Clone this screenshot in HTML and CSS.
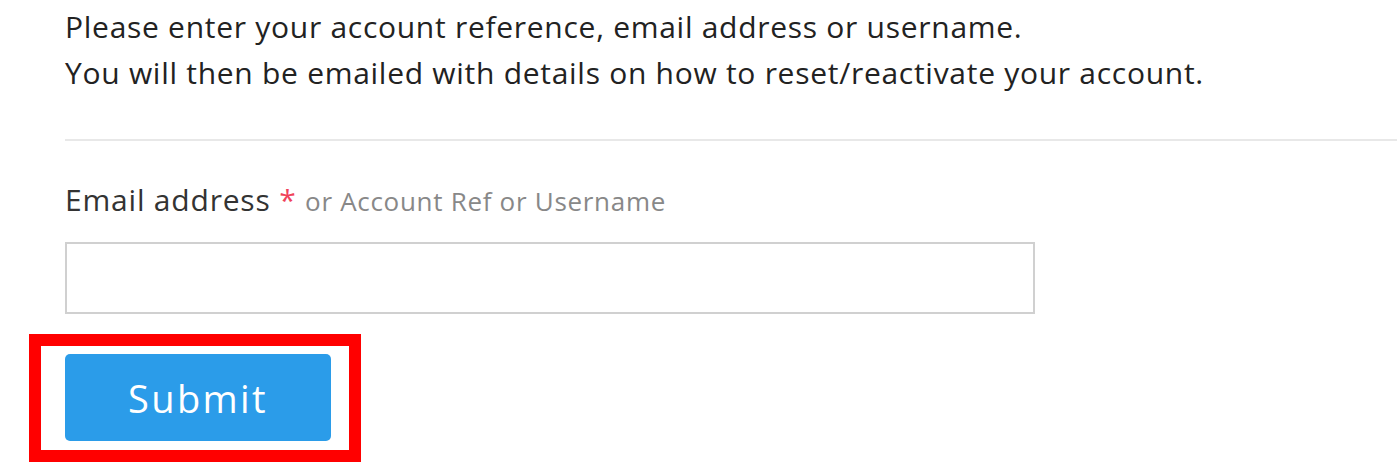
FILE: index.html
```html
<!DOCTYPE html>
<html>
<head>
    <title>Reset Account</title>
    <link rel="stylesheet" href="styles.css">
</head>
<body>
    <div class="page">
        <p class="intro">Please enter your account reference, email address or username.<br>
        You will then be emailed with details on how to reset/reactivate your account.</p>

        <hr class="divider">

        <form class="reset-form" onsubmit="return false;">
            <label for="accountInput" class="field-label">Email address <span class="required">*</span> <span class="hint">or Account Ref or Username</span></label>
            <input type="text" id="accountInput" class="field-input">

            <div class="highlight">
                <button type="submit" class="submit-btn">Submit</button>
            </div>
        </form>
    </div>
</body>
</html>
```

FILE: styles.css
```css
body {
    margin: 0;
    font-family: "Open Sans", Arial, sans-serif;
    color: #222;
    background: #fff;
}
.page {
    padding: 4px 0 0 65px;
}
.intro {
    margin: 0;
    font-size: 30px;
    line-height: 46px;
    letter-spacing: 0.72px;
}
.divider {
    margin: 43px 0 0;
    border: 0;
    border-top: 2px solid #e8e8e8;
}
.field-label {
    display: block;
    margin-top: 39px;
    font-size: 30px;
    line-height: 40px;
    letter-spacing: 0.8px;
    color: #333;
}
.required {
    color: #f0435a;
}
.hint {
    font-size: 26px;
    letter-spacing: 0.7px;
    color: #888;
}
.field-input {
    display: block;
    box-sizing: border-box;
    width: 970px;
    height: 72px;
    margin-top: 21px;
    border: 2px solid #d0d0d0;
    border-radius: 0;
    font-size: 24px;
    font-family: inherit;
}
.highlight {
    display: inline-block;
    margin: 20px 0 0 -36px;
    padding: 8px 18px 9px 24px;
    border: 12px solid #ff0000;
}
.submit-btn {
    display: block;
    width: 266px;
    height: 87px;
    border: none;
    border-radius: 5px;
    background-color: #2b9ce9;
    color: #fff;
    font-family: inherit;
    font-size: 38px;
    letter-spacing: 2.4px;
    cursor: pointer;
}
```
